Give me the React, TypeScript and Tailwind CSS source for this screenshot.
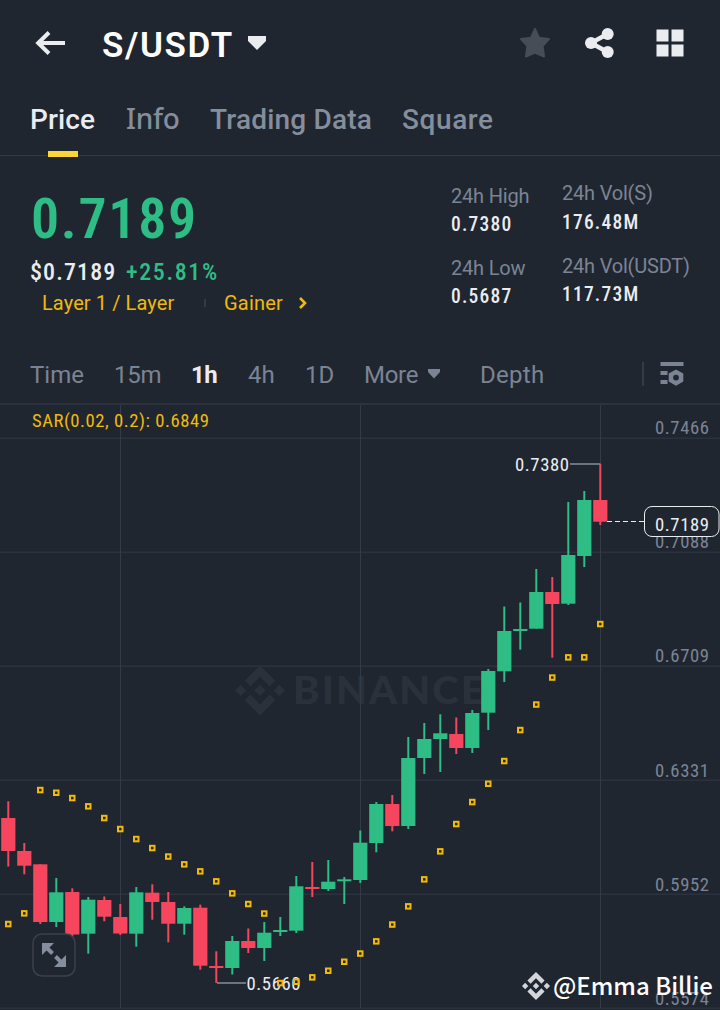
import React from "react";

type Candle = {
  up: boolean;
  high: number;
  low: number;
  top: number;
  bottom: number;
};

const c = (up: number, high: number, low: number, top: number, bottom: number): Candle => ({
  up: up === 1,
  high,
  low,
  top,
  bottom,
});

const candles: Candle[] = [
  c(0, 801.3, 866.5, 818, 851),
  c(0, 843, 874.3, 851, 865.7),
  c(0, 864.3, 924, 864.3, 922),
  c(1, 878, 927, 892.3, 922),
  c(0, 888.3, 936.5, 892, 934.5),
  c(1, 897, 953.7, 899.7, 933.7),
  c(0, 896.5, 921.3, 900, 916.7),
  c(0, 904, 935, 917, 933.5),
  c(1, 887, 946.7, 892.3, 933.7),
  c(0, 884.3, 919.7, 892.7, 902),
  c(0, 892, 942.3, 902, 923.7),
  c(1, 906.3, 934.7, 908, 923.7),
  c(0, 904.7, 969.7, 907.7, 965.7),
  c(0, 951.3, 983, 966, 968),
  c(1, 936, 974.5, 941, 968),
  c(0, 928.5, 953, 941, 948),
  c(1, 922, 961, 932.7, 948),
  c(1, 917, 936, 930, 932),
  c(1, 876, 933, 886.3, 930.7),
  c(0, 862, 897, 887, 889),
  c(1, 860, 891, 881.7, 889),
  c(1, 877, 904, 879.3, 881.3),
  c(1, 830.5, 883, 842.7, 880),
  c(1, 802, 852.3, 804, 843),
  c(0, 795, 831.3, 804, 826),
  c(1, 737, 829, 758, 826),
  c(1, 723, 774, 739, 758),
  c(1, 714.3, 772, 733.3, 739),
  c(0, 717.5, 754, 734, 748),
  c(1, 710, 753, 713, 748),
  c(1, 669, 730, 671, 712.7),
  c(1, 606.5, 682, 631, 671.3),
  c(1, 602.5, 649.7, 629, 631),
  c(1, 569, 628.7, 592, 628.7),
  c(0, 577, 657.7, 592, 604),
  c(1, 502, 605, 555, 603.7),
  c(1, 491, 567, 500, 556),
  c(0, 464, 525, 500, 521.7),
];

const sar = [
  924, 913.3, 790, 792.7, 798, 806.3, 818, 829, 839, 848, 856.5, 864.3, 871.3, 881.3, 893.3, 904,
  913.5, 983, 981.7, 977.3, 970.7, 961.7, 953.5, 941.3, 924.5, 906.3, 879.3, 851.3, 824, 802,
  783.7, 761, 730, 704.5, 677.5, 657.3, 657.3, 624,
];

const axis = [
  { label: "0.7466", line: 438, base: 434 },
  { label: "0.7088", line: 552, base: 548 },
  { label: "0.6709", line: 666, base: 662 },
  { label: "0.6331", line: 780, base: 777 },
  { label: "0.5952", line: 894, base: 891 },
  { label: "0.5574", line: 1008, base: 1005 },
];

const LOGO =
  "M16.624 13.9202l2.7175 2.7154-7.353 7.353-7.353-7.352 2.7175-2.7164 4.6355 4.6595 4.6356-4.6595zm4.6366-4.6366L24 12l-2.7154 2.7164L18.5682 12l2.6924-2.7164zm-9.272.001l2.7163 2.6914-2.7164 2.7174v-.001L9.2721 12l2.7164-2.7154zm-9.2722-.001L5.4088 12l-2.6914 2.6924L0 12l2.7164-2.7164zM11.9885.0115l7.353 7.329-2.7174 2.7154-4.6356-4.6356-4.6355 4.6595-2.7174-2.7154 7.353-7.353z";

const Header: React.FC = () => (
  <header className="flex h-[86px] items-center pl-[35px] pr-9">
    <svg width="30" height="24" viewBox="0 0 30 24" fill="none" stroke="#EAECEF" strokeWidth="4">
      <path d="M2.5 12H30M14 1.5L3.2 12L14 22.5" />
    </svg>
    <h1 className="ml-[37px] w-[146px] whitespace-nowrap pt-[5px] text-[35px] font-semibold leading-9 tracking-[1.6px] text-white">
      S/USDT
    </h1>
    <svg width="18" height="14" viewBox="0 0 18 14" fill="#EAECEF">
      <path d="M0 0H18V5L9 14L0 5Z" />
    </svg>
    <div className="ml-auto flex items-center">
      <svg width="30" height="30" viewBox="0 0 30 30" fill="#474D57" stroke="#474D57" strokeWidth="2" strokeLinejoin="round">
        <path d="M15 1L19 9.8L29 11L22.6 18L24 28.5L15 24.5L6 28.5L7.4 18L1 11L11 9.8Z" />
      </svg>
      <svg className="ml-[35px]" width="29" height="30" viewBox="0 0 29 30" fill="#EAECEF">
        <path d="M6 15L22.5 6M6 15L22.5 24" stroke="#EAECEF" strokeWidth="4.4" />
        <circle cx="6" cy="15" r="6" />
        <circle cx="22.7" cy="6" r="6" />
        <circle cx="22.7" cy="24" r="6" />
      </svg>
      <svg className="ml-[42px]" width="28" height="28" viewBox="0 0 28 28" fill="#EAECEF">
        <path d="M.5.5h12v12H.5zM15.500.5h12v12h-12zM.5 15.500h12v12H.5zM15.500 15.500h12v12h-12z" />
      </svg>
    </div>
  </header>
);

const Tabs: React.FC = () => (
  <nav className="flex h-[70px] items-baseline whitespace-nowrap border-b border-[#333B47] pl-[30px] pt-[14px] text-[28px] font-medium leading-9 text-[#848E9C]">
    <div className="w-24 text-[#EAECEF]">
      <span className="tracking-[0.1px]">Price</span>
      <div className="ml-[18px] mt-[13px] h-1.5 w-[30px] bg-[#FCD535]" />
    </div>
    <div className="w-[84px] font-['Noto_Sans',sans-serif] tracking-[-0.2px]">Info</div>
    <div className="w-48 tracking-[0.2px]">Trading Data</div>
    <div className="tracking-[0.6px]">Square</div>
  </nav>
);

const Stat: React.FC<{ label: string; value: string; className?: string; gap?: string }> = ({
  label,
  value,
  className,
  gap,
}) => (
  <div className={className}>
    <p className="text-xl leading-7 tracking-[-0.2px] text-[#7B8494]">{label}</p>
    <p className={`h-7 text-[19.5px] font-medium leading-[30px] tracking-[1.2px] text-[#EAECEF] [font-stretch:75%] ${gap || ""}`}>
      {value}
    </p>
  </div>
);

const Summary: React.FC = () => (
  <section className="flex h-[188px] whitespace-nowrap">
    <div className="w-[451px] pl-[30px] pt-[35px]">
      <p className="ml-px text-[56px] font-semibold leading-[56px] tracking-[1.7px] text-[#2EBD85] [font-stretch:75%]">
        0.7189
      </p>
      <div className="mt-[13px] flex text-2xl font-medium leading-6 [font-stretch:75%]">
        <span className="w-24 tracking-[1.1px] text-[#EAECEF]">$0.7189</span>
        <span className="tracking-[1.6px] text-[#2EBD85]">+25.81%</span>
      </div>
      <div className="mt-[9px] flex items-center pl-3 text-xl leading-5 text-[#F0B90B]">
        <span className="w-[162px] tracking-[0.1px]">Layer 1 / Layer</span>
        <span className="h-2 w-0.5 bg-[#333B47]" />
        <span className="ml-[18px] w-[75px] tracking-[0.2px]">Gainer</span>
        <svg width="8" height="12" viewBox="0 0 8 12" fill="none" stroke="#F0B90B" strokeWidth="2.6">
          <path d="M1 1L6 6L1 11" />
        </svg>
      </div>
    </div>
    <div className="w-[111px] pt-[26px]">
      <Stat label="24h High" value="0.7380" />
      <Stat label="24h Low" value="0.5687" className="mt-4" />
    </div>
    <div className="pt-[23px]">
      <Stat label="24h Vol(S)" value="176.48M" gap="mt-px" />
      <Stat label="24h Vol(USDT)" value="117.73M" className="mt-4" />
    </div>
  </section>
);

const Intervals: React.FC = () => (
  <div className="flex h-[59px] items-center whitespace-nowrap pl-[30px] text-2xl leading-6 text-[#7B8494]">
    <span className="w-[84px] pt-[3px]">Time</span>
    <span className="w-[77px] pt-[3px] tracking-[-0.3px]">15m</span>
    <span className="w-[57px] pt-[3px] font-bold tracking-[-0.5px] text-[#EAECEF]">1h</span>
    <span className="w-[57px] pt-[3px]">4h</span>
    <span className="w-[59px] pt-[3px]">1D</span>
    <span className="w-16 pt-[3px] tracking-[-0.3px]">More</span>
    <svg width="12" height="10" viewBox="0 0 12 10" fill="#7B8494">
      <path d="M0 0H12V3L6 9.500L0 3Z" />
    </svg>
    <span className="ml-10 w-[162px] pt-[3px] tracking-[0.3px]">Depth</span>
    <span className="h-6 w-0.5 bg-[#333B47]" />
    <svg className="ml-4" width="24" height="24" viewBox="0 0 24 24" fill="#7B8494">
      <path d="M.5 0H23.5V4H.5zM.5 9H7.500V13H.5zM.5 18H7.500V22H.5z" />
      <path fillRule="evenodd" d="M16 7.500L23.300 11.600V19.600L16 23.800L8.700 19.600V11.600ZM16 12.700A2.900 2.900 0 1 0 16 18.500A2.900 2.900 0 1 0 16 12.700Z" />
    </svg>
  </div>
);

const Chart: React.FC = () => (
  <svg
    className="block text-[18.7px] [font-stretch:75%]"
    width="720"
    height="607"
    viewBox="0 403 720 607"
  >
    {/* watermark */}
    <g fill="#2B313B">
      <path d={LOGO} transform="translate(235 665.500) scale(2.083)" />
      <text
        x="293"
        y="704"
        textLength="193"
        lengthAdjust="spacingAndGlyphs"
        className="font-['Lato',sans-serif] text-[37.5px] font-black tracking-[2px] [font-stretch:100%]"
      >
        BINANCE
      </text>
    </g>

    {/* grid */}
    <rect y="403" width="720" height="2" fill="#2B323D" />
    {axis.map((a) => (
      <rect key={a.label} y={a.line - 0.5} width="720" height="1.5" fill="#2B323D" />
    ))}
    {[120, 360, 600].map((x) => (
      <rect key={x} x={x} y="405" width="1" height="603" fill="#333B47" />
    ))}

    <text x="32" y="427" textLength="177" fill="#F0B90B">
      SAR(0.02, 0.2): 0.6849
    </text>
    {axis.map((a) => (
      <text key={a.label} x="655" y={a.base} textLength="54" fill="#7B8494">
        {a.label}
      </text>
    ))}

    {candles.map((k, i) => {
      const x = 8.3 + i * 16;
      return (
        <g key={i} fill={k.up ? "#2EBD85" : "#F6465D"}>
          <rect x={x - 1} y={k.high} width="2" height={k.low - k.high} />
          <rect x={x - 7.1} y={k.top} width="14.200" height={k.bottom - k.top} />
        </g>
      );
    })}

    {/* high, low and last price */}
    <path d="M570 464H600.500M217 983H246" stroke="#848E9C" strokeWidth="1.500" />
    <g fill="#EAECEF">
      <text x="515" y="471" textLength="54">0.7380</text>
      <text x="246.500" y="990" textLength="54">0.5660</text>
    </g>
    <path d="M607 521.500H644" stroke="#EAECEF" strokeWidth="1" strokeDasharray="5 3" />
    <rect x="644.500" y="506.500" width="74.500" height="30" rx="7.500" fill="#202630" stroke="#EAECEF" />
    <text x="655" y="531" textLength="54" fill="#EAECEF">0.7189</text>

    {sar.map((y, i) => (
      <rect
        key={i}
        x={6 + i * 16}
        y={y - 2.2}
        width="4.500"
        height="4.500"
        fill="#202630"
        stroke="#F0B90B"
        strokeWidth="2"
      />
    ))}

    {/* fullscreen button */}
    <rect x="33" y="934" width="42" height="42" rx="9" fill="#202630" stroke="#3A414D" strokeWidth="1.500" />
    <g fill="#848E9C">
      <path d="M42 943H54L42 955zM66 967H54L66 955z" />
      <path d="M46 947L52.500 953.500M55.500 956.500L62 963" stroke="#848E9C" strokeWidth="4" />
    </g>

    <path d={LOGO} fill="#D3D5D9" transform="translate(522 972) scale(1.167)" />
    <text x="553" y="995" fill="#fff" className="font-['Noto_Sans_CJK_SC',sans-serif] text-2xl font-medium [font-stretch:100%]">
      @Emma Billie
    </text>
  </svg>
);

export default function App() {
  return (
    <main className="h-[1010px] w-[720px] overflow-hidden bg-[#202630] font-['Roboto',sans-serif]">
      <Header />
      <Tabs />
      <Summary />
      <Intervals />
      <Chart />
    </main>
  );
}
